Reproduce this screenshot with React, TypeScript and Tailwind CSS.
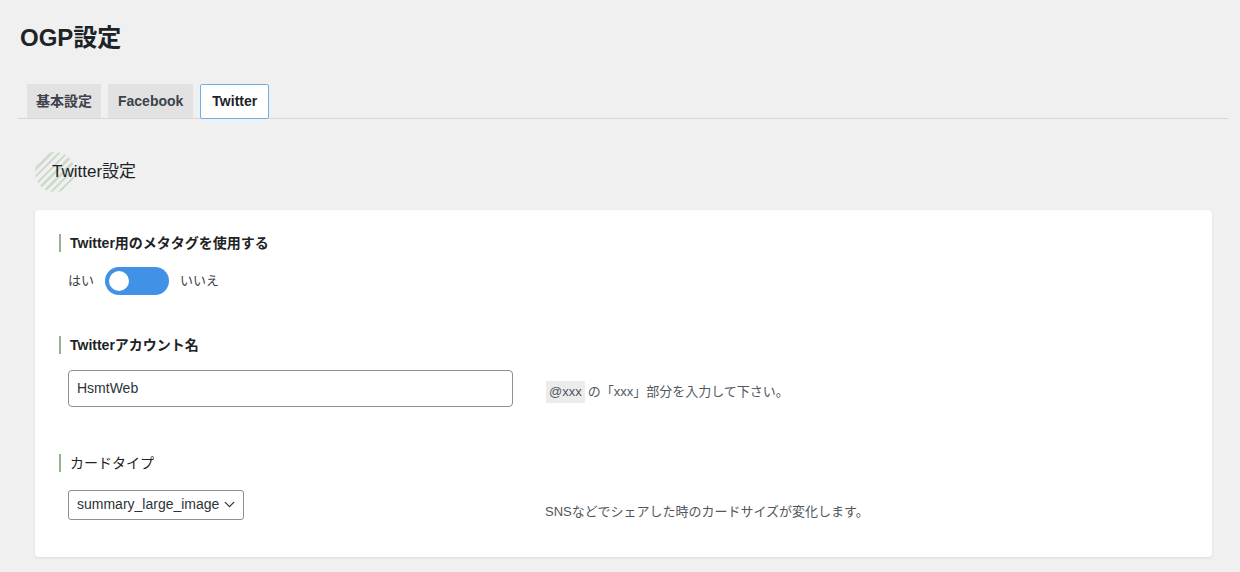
import { ChevronDown } from 'lucide-react'

const font = { fontFamily: '"Liberation Sans", "Noto Sans CJK JP", sans-serif' }

function FieldLabel({ children }: { children: React.ReactNode }) {
  return (
    <div className="flex items-center h-[18px] border-l-2 border-[#93b38d] pl-[9px] text-[14px] font-bold text-[#1d2327]">
      {children}
    </div>
  )
}

export default function App() {
  return (
    <div className="min-h-[572px] bg-[#f0f0f1] pl-[18px] pr-[12px] pt-[22px]" style={font}>
      <h1 className="pl-[2px] text-[24px] font-semibold leading-[32px] text-[#1d2327]">OGP設定</h1>

      {/* Tabs */}
      <div className="mt-[30px] flex items-end gap-[7px] border-b border-[#d8d8da] pl-[9px]">
        <button className="h-[34px] bg-[#e2e2e3] px-[9px] text-[14px] font-semibold text-[#3c434a]">基本設定</button>
        <button className="h-[34px] bg-[#e2e2e3] px-[10px] text-[14px] font-semibold text-[#3c434a]">Facebook</button>
        <button className="mb-[-1px] h-[35px] rounded-[2px] border border-[#72aee6] bg-white px-[11px] text-[14px] font-semibold text-[#1d2327]">
          Twitter
        </button>
      </div>

      {/* Section heading */}
      <div className="mt-[33px] flex items-center pl-[17px]">
        <div className="h-[40px] w-[40px] rounded-full bg-[repeating-linear-gradient(135deg,#cfdccc_0px,#cfdccc_2.5px,transparent_2.5px,transparent_5.5px)]" />
        <h2 className="ml-[-23px] text-[17px] font-normal text-[#1d2327]">Twitter設定</h2>
      </div>

      {/* Card */}
      <div className="mt-[18px] ml-[17px] mr-[16px] h-[347px] rounded-[4px] bg-white pl-[24px] pt-[24px] shadow-[0_1px_3px_rgba(0,0,0,0.08)]">
        <FieldLabel>Twitter用のメタタグを使用する</FieldLabel>
        <div className="mt-[15px] flex items-center pl-[9px] text-[13px] text-[#3c434a]">
          <span>はい</span>
          <span className="ml-[11px] flex h-[28px] w-[64px] items-center rounded-full bg-[#4191e6] pl-[4px]">
            <span className="h-[20px] w-[20px] rounded-full bg-white" />
          </span>
          <span className="ml-[11px]">いいえ</span>
        </div>

        <div className="mt-[41px]">
          <FieldLabel>Twitterアカウント名</FieldLabel>
        </div>
        <div className="mt-[16px] flex items-center pl-[9px]">
          <div className="flex h-[37px] w-[445px] items-center rounded-[4px] border border-[#8c8f94] px-[8px] text-[14px] text-[#2c3338]">
            HsmtWeb
          </div>
          <div className="ml-[33px] mt-[7px] flex items-center text-[13px] text-[#50575e]">
            <code className="bg-[#ececec] px-[3px] py-[1px] text-[13px]" style={font}>@xxx</code>
            <span className="ml-[3px]">の「xxx」部分を入力して下さい。</span>
          </div>
        </div>

        <div className="mt-[47px]">
          <FieldLabel>
            <span className="font-normal">カードタイプ</span>
          </FieldLabel>
        </div>
        <div className="mt-[16px] flex items-center pl-[9px]">
          <div className="flex h-[30px] w-[176px] items-center justify-between rounded-[3px] border border-[#8c8f94] pl-[8px] pr-[5px] text-[14px] text-[#2c3338]">
            <span>summary_large_image</span>
            <ChevronDown size={17} strokeWidth={1.75} className="text-[#2c3338]" />
          </div>
          <div className="ml-[301px] mt-[14px] text-[13px] text-[#50575e]">SNSなどでシェアした時のカードサイズが変化します。</div>
        </div>
      </div>
    </div>
  )
}
